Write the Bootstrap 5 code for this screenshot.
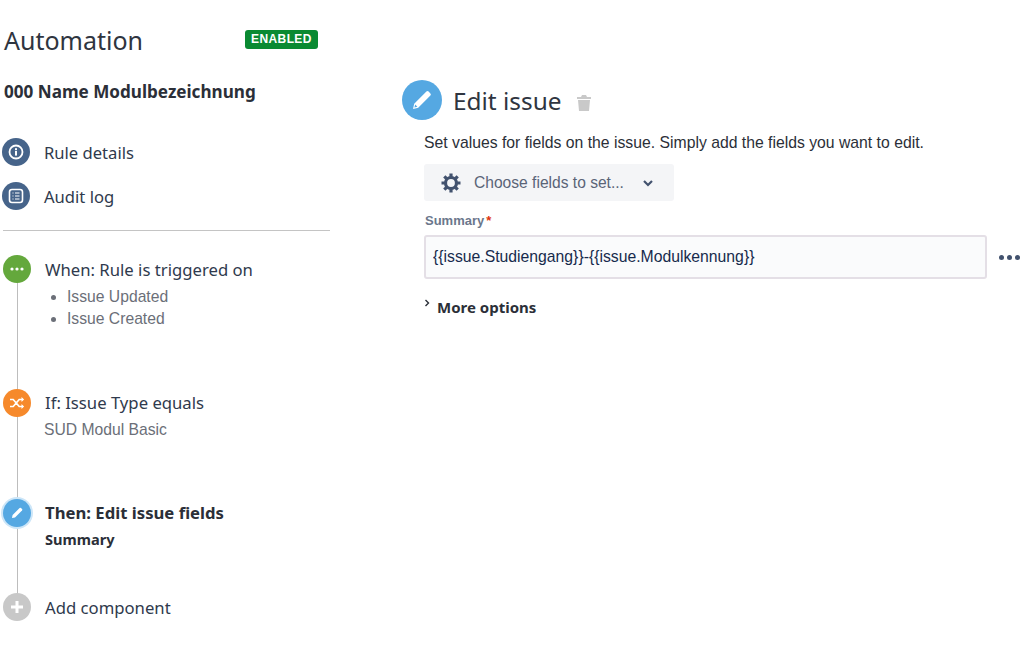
<!DOCTYPE html>
<html lang="en">
<head>
  <meta charset="UTF-8" />
  <meta name="viewport" content="width=device-width, initial-scale=1.0"/>
  <title>Automation</title>
  <link href="https://cdn.jsdelivr.net/npm/bootstrap@5.3.3/dist/css/bootstrap.min.css" rel="stylesheet" />
  <script src="https://cdn.jsdelivr.net/npm/bootstrap@5.3.3/dist/js/bootstrap.bundle.min.js"></script>
  <style>
    body {
      font-family: "Noto Sans", sans-serif;
      color: #253858;
      background: #fff;
      height: 654px;
      overflow: hidden;
    }
    .side-col { width: 327px; margin-left: 3px; flex: none; }
    .main-col { margin-left: 72px; padding-top: 80px; flex: 1; min-width: 0; }

    .page-title { font-size: 25px; font-weight: 400; color: #2f3540; margin: -1px 0 1px 1px; line-height: 34px; }
    .status-tag {
      background: #0a8a32; color: #fff; font: bold 12px/1 "Liberation Sans", sans-serif;
      letter-spacing: .4px; padding: 3px 6px; border-radius: 3px; margin-left: 102px; margin-top: 6px;
      height: 19px;
    }
    .rule-name { font-size: 17.1px; font-weight: 700; color: #2b2f38; margin: 22px 0 34px 1px; line-height: 24px; }
    .side-link { font-size: 16.6px; color: #2f3a4d; height: 28px; gap: 14px; margin: 0 0 16px -1px; }
    .side-text { margin-top: 2px; }
    .round-ico {
      width: 28px; height: 28px; border-radius: 50%; flex: none;
      display: flex; align-items: center; justify-content: center;
    }
    .ico-slate { background: #46648a; }
    .ico-green { background: #64a83c; }
    .ico-orange { background: #f6892b; }
    .ico-blue { background: #55a8e2; box-shadow: 0 0 0 2px #cde6f8; }
    .ico-grey { background: #c8c8c8; }
    .side-rule { border-top: 1px solid #c4c4c4; margin: 20px 0 24px; }

    .steps { position: relative; }
    .steps::before {
      content: ""; position: absolute; left: 14px; top: 0; height: 340px;
      border-left: 1px solid #bdbdbd;
    }
    .step-item { position: relative; display: flex; gap: 14px; }
    .step-title { font-size: 16.7px; line-height: 28px; color: #2f3a4d; }
    .title-down { margin-top: 1px; }
    .step-sub { font: 15.7px/22px "Liberation Sans", sans-serif; color: #6b6f78; }
    .step-sub ul { margin: 2px 0 0; padding-left: 22px; }
    .step-when { height: 134px; }
    .step-if { height: 110px; }
    .step-then { height: 94px; }
    .sub-shift { margin-left: -1px; margin-top: 2px; }
    .strong-title { font-weight: 700; color: #2b2f38; }
    .strong-sub { font: 700 14.6px/22px "Noto Sans", sans-serif; color: #2b2f38; margin-top: 1px; }

    .edit-ico { width: 40px; height: 40px; background: #55a8e2; }
    .edit-title { font-size: 24.4px; color: #2f3540; margin: 0 0 0 11px; height: 40px; line-height: 42px; font-weight: 400; }
    .trash-ico { margin: 6px 0 0 15px; }
    .edit-body { margin-left: 22px; font-family: "Liberation Sans", sans-serif; }
    .edit-desc { font-size: 15.75px; color: #2b2f38; margin: 12px 0 0; line-height: 22px; }
    .field-btn {
      width: 250px; height: 37px; margin-top: 10px; background: #f4f5f7; border: 0; border-radius: 3px;
      color: #5a6477; font-size: 15.6px; padding: 0 0 0 16px; gap: 12px;
    }
    .btn-caret { margin-left: 7px; }
    .field-label { font-size: 13px; font-weight: 700; color: #6b778c; margin: 12px 0 6px 1px; line-height: 16px; display: block; }
    .field-label span { color: #de350b; margin-left: 2px; }
    .field-row { gap: 12px; }
    .field-input {
      width: 563px; height: 44px; border: 2px solid #e4dfe6; border-radius: 3px; background: #fafbfc;
      font-size: 15.75px; color: #172b4d; padding: 0 7px; box-shadow: none; font-family: inherit;
    }
    .more-dots { gap: 3px; }
    .more-dots i { width: 5px; height: 5px; border-radius: 50%; background: #42526e; display: block; }
    .more-opts { font: 700 15px/22px "Noto Sans", sans-serif; color: #2b2f38; margin-top: 17px; gap: 6px; }
  </style>
</head>
<body>
  <div class="d-flex">
    <div class="side-col">
      <div class="d-flex align-items-start pt-4">
        <h1 class="page-title">Automation</h1>
        <span class="status-tag">ENABLED</span>
      </div>
      <div class="rule-name">000 Name Modulbezeichnung</div>

      <div class="side-link d-flex align-items-center">
        <span class="round-ico ico-slate">
          <svg width="16" height="16" viewBox="0 0 16 16"><circle cx="8" cy="8" r="6.5" fill="none" stroke="#fff" stroke-width="1.8"/><rect x="7" y="7" width="2" height="4.6" fill="#fff"/><rect x="7" y="4.2" width="2" height="2" fill="#fff"/></svg>
        </span>
        <span class="side-text">Rule details</span>
      </div>
      <div class="side-link d-flex align-items-center">
        <span class="round-ico ico-slate">
          <svg width="16" height="16" viewBox="0 0 16 16" fill="none" stroke="#fff"><rect x="1.5" y="1.5" width="13" height="13" rx="2.5" stroke-width="1.6"/><path d="M4.5 5h1M7 5h4.5M4.5 8h1M7 8h4.5M4.5 11h1M7 11h4.5" stroke-width="1.2"/></svg>
        </span>
        <span class="side-text">Audit log</span>
      </div>
      <div class="side-rule"></div>

      <div class="steps">
        <div class="step-item step-when">
          <span class="round-ico ico-green">
            <svg width="14" height="4" viewBox="0 0 14 4" fill="#fff"><circle cx="2" cy="2" r="1.6"/><circle cx="7" cy="2" r="1.6"/><circle cx="12" cy="2" r="1.6"/></svg>
          </span>
          <div>
            <div class="step-title title-down">When: Rule is triggered on</div>
            <div class="step-sub"><ul><li>Issue Updated</li><li>Issue Created</li></ul></div>
          </div>
        </div>
        <div class="step-item step-if">
          <span class="round-ico ico-orange">
            <svg width="16" height="14" viewBox="0 0 16 14" fill="none" stroke="#fff" stroke-width="1.7"><path d="M1 3.5h3.2l6 7H13M1 10.5h3.2l6-7H13"/><path d="M12.5 1l2.6 2.5-2.6 2.5zM12.5 8l2.6 2.5-2.6 2.5z" fill="#fff" stroke="none"/></svg>
          </span>
          <div>
            <div class="step-title">If: Issue Type equals</div>
            <div class="step-sub sub-shift">SUD Modul Basic</div>
          </div>
        </div>
        <div class="step-item step-then">
          <span class="round-ico ico-blue">
            <svg width="14" height="14" viewBox="0 0 14 14"><path d="M2 12l.6-3L9.6 2a1 1 0 0 1 1.4 0l1 1a1 1 0 0 1 0 1.4L5 11.4z" fill="#fff"/></svg>
          </span>
          <div>
            <div class="step-title strong-title">Then: Edit issue fields</div>
            <div class="strong-sub">Summary</div>
          </div>
        </div>
        <div class="step-item">
          <span class="round-ico ico-grey">
            <svg width="12" height="12" viewBox="0 0 12 12" fill="#fff"><path d="M4.5 0h3v4.5H12v3H7.5V12h-3V7.5H0v-3h4.5z"/></svg>
          </span>
          <div class="step-title title-down">Add component</div>
        </div>
      </div>
    </div>

    <div class="main-col">
      <div class="d-flex align-items-center">
        <span class="round-ico edit-ico">
          <svg width="24" height="24" viewBox="0 0 24 24"><path d="M3 21l1.2-5.2L16.4 3.6a1.6 1.6 0 0 1 2.2 0l1.8 1.8a1.6 1.6 0 0 1 0 2.2L8.2 19.8zM5.2 16.6l-.8 3 3-.8z" fill="#fff" fill-rule="evenodd"/></svg>
        </span>
        <h2 class="edit-title">Edit issue</h2>
        <svg class="trash-ico" width="14" height="16" viewBox="0 0 14 16" fill="#c9c9c9"><path d="M5 0h4l1 2h4v2H0V2h4zM1 5h12l-1 11H2z"/></svg>
      </div>
      <div class="edit-body">
        <p class="edit-desc">Set values for fields on the issue. Simply add the fields you want to edit.</p>
        <button type="button" class="field-btn d-flex align-items-center">
          <svg width="22" height="22" viewBox="0 0 22 22" fill="none" stroke="#42526e"><circle cx="11" cy="11" r="5.5" stroke-width="3.2"/><path d="M11 1.5v4M11 16.5v4M1.5 11h4M16.5 11h4M4.3 4.3l2.8 2.8M14.9 14.9l2.8 2.8M4.3 17.7l2.8-2.8M14.9 7.1l2.8-2.8" stroke-width="3.2"/></svg>
          <span>Choose fields to set...</span>
          <svg class="btn-caret" width="10" height="8" viewBox="0 0 10 8" fill="none" stroke="#42526e" stroke-width="2.2"><path d="M1 2l4 4 4-4"/></svg>
        </button>
        <label class="field-label" for="summary">Summary<span>*</span></label>
        <div class="field-row d-flex align-items-center">
          <input id="summary" class="field-input" type="text" value="{{issue.Studiengang}}-{{issue.Modulkennung}}" />
          <div class="more-dots d-flex"><i></i><i></i><i></i></div>
        </div>
        <div class="more-opts d-flex align-items-center">
          <svg width="7" height="9" viewBox="0 0 7 9" fill="none" stroke="#2b2f38" stroke-width="1.4" class="mb-2"><path d="M1.5 1l3 3-3 3"/></svg>
          More options
        </div>
      </div>
    </div>
  </div>
</body>
</html>
